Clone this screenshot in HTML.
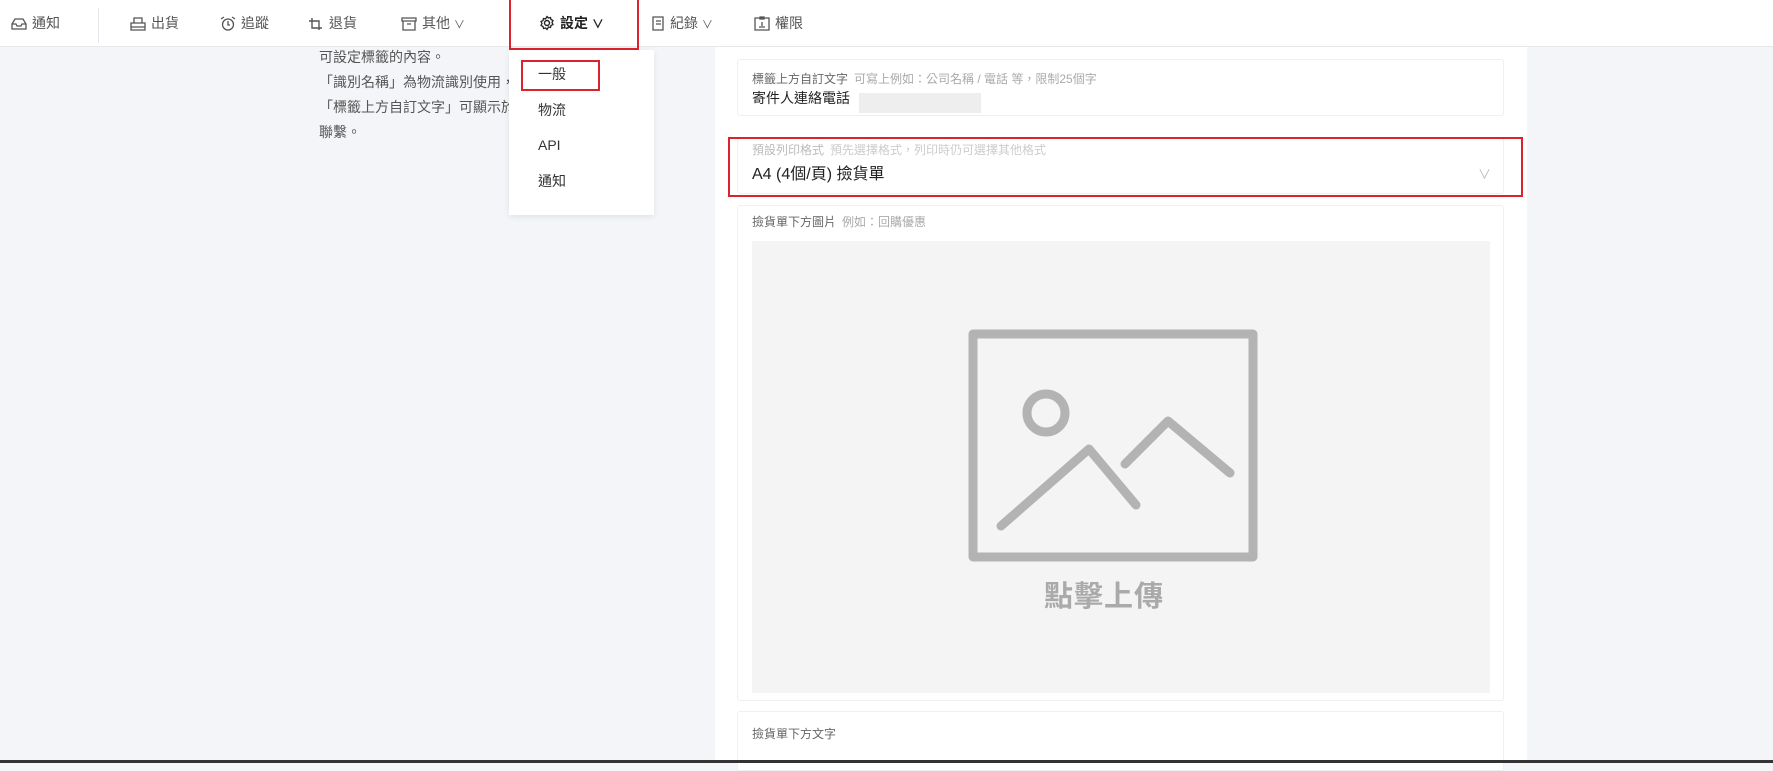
<!DOCTYPE html>
<html><head><meta charset="utf-8"><style>
*{margin:0;padding:0;box-sizing:border-box}
body{width:1773px;height:763px;overflow:hidden;background:#f3f5f8;font-family:"Liberation Sans","Noto Sans CJK TC",sans-serif;color:#333;position:relative}
.a{position:absolute;white-space:nowrap}
.nav{position:absolute;left:0;top:0;width:1773px;height:47px;background:#fff;border-bottom:1px solid #e5e7ea}
.ni{position:absolute;top:14px;font-size:14px;color:#555;line-height:18px}
.ni svg{vertical-align:-3px;margin-right:5px}
.red{position:absolute;border:2px solid #d9232e}
.panel{position:absolute;left:715px;top:47px;width:812px;height:716px;background:#fff}
.card{position:absolute;left:737px;width:767px;background:#fff;border:1px solid #eef0f2;border-radius:3px}
.lbl{font-size:12px;color:#666}
.lbl span{color:#aaa;margin-left:6px}
.lt{font-size:14px;color:#555;line-height:25px}
</style></head><body>
<div class="nav"></div>
<div class="a" style="left:98px;top:8px;width:1px;height:35px;background:#e5e7ea"></div>
<div class="ni a" style="left:11px"><svg width="16" height="14" viewBox="0 0 16 14"><path d="M1 7l3-5h8l3 5v5H1z M1 7h4l1 2h4l1-2h4" fill="none" stroke="#555" stroke-width="1.3"/></svg>通知</div>
<div class="ni a" style="left:130px"><svg width="16" height="14" viewBox="0 0 16 14"><path d="M4 6V1h8v5 M1 6h14v7H1z M1 10h14" fill="none" stroke="#555" stroke-width="1.3"/></svg>出貨</div>
<div class="ni a" style="left:220px"><svg width="16" height="15" viewBox="0 0 16 15"><circle cx="8" cy="8.5" r="5.5" fill="none" stroke="#555" stroke-width="1.3"/><path d="M8 5v4h2 M1 3l3-2 M15 3l-3-2" fill="none" stroke="#555" stroke-width="1.3"/></svg>追蹤</div>
<div class="ni a" style="left:308px"><svg width="16" height="14" viewBox="0 0 16 14"><path d="M4 1v10h10 M1 4h10v9" fill="none" stroke="#555" stroke-width="1.4"/></svg>退貨</div>
<div class="ni a" style="left:401px"><svg width="16" height="14" viewBox="0 0 16 14"><path d="M1 1h14v3H1z M2 4v9h12V4 M6 7h4" fill="none" stroke="#555" stroke-width="1.3"/></svg>其他 <span style="font-size:11px">∨</span></div>
<div class="ni a" style="left:539px;color:#222;font-weight:bold"><svg width="16" height="16" viewBox="0 0 16 16"><circle cx="8" cy="8" r="2.5" fill="none" stroke="#222" stroke-width="1.4"/><path d="M8 1.5l1.5 1.5 2-.5.5 2 2 1-1 2 1 2-2 1-.5 2-2-.5L8 14.5 6.5 13l-2 .5-.5-2-2-1 1-2-1-2 2-1 .5-2 2 .5z" fill="none" stroke="#222" stroke-width="1.3"/></svg>設定 <span style="font-size:12px">∨</span></div>
<div class="ni a" style="left:651px"><svg width="14" height="15" viewBox="0 0 14 15"><path d="M2 1h10v13H2z M5 5h5 M5 8h5" fill="none" stroke="#555" stroke-width="1.3"/></svg>紀錄 <span style="font-size:11px">∨</span></div>
<div class="ni a" style="left:754px"><svg width="16" height="15" viewBox="0 0 16 15"><path d="M1 2h14v12H1z M6 1h4v2H6z M8 6v4 M5 11h6" fill="none" stroke="#555" stroke-width="1.3"/></svg>權限</div>
<div class="red" style="left:509px;top:-2px;width:130px;height:52px"></div>

<div class="a lt" style="left:319px;top:45px">可設定標籤的內容。<br>「識別名稱」為物流識別使用，不會顯示於標籤上。<br>「標籤上方自訂文字」可顯示於標籤上方，方便客<br>聯繫。</div>

<div class="a" style="left:509px;top:50px;width:145px;height:165px;background:#fff;box-shadow:0 2px 6px rgba(0,0,0,.08)"></div>
<div class="a" style="left:538px;top:57px;font-size:14px;line-height:35.5px;color:#333">一般<br>物流<br>API<br>通知</div>
<div class="red" style="left:521px;top:60px;width:79px;height:31px"></div>

<div class="panel"></div>
<div class="card" style="top:59px;height:57px"></div>
<div class="a lbl" style="left:752px;top:70px">標籤上方自訂文字<span>可寫上例如：公司名稱 / 電話 等，限制25個字</span></div>
<div class="a" style="left:752px;top:88px;font-size:14px;color:#222">寄件人連絡電話</div>
<div class="a" style="left:859px;top:93px;width:122px;height:20px;background:#eeeeee"></div>

<div class="card" style="top:138px;height:56px"></div>
<div class="a lbl" style="left:752px;top:141px;color:#bbb">預設列印格式<span style="color:#ccc">預先選擇格式，列印時仍可選擇其他格式</span></div>
<div class="a" style="left:752px;top:160px;font-size:16px;color:#222">A4 (4個/頁) 撿貨單</div>
<div class="a" style="left:1478px;top:164px;font-size:13px;color:#bbb">∨</div>
<div class="red" style="left:728px;top:137px;width:795px;height:60px"></div>

<div class="card" style="top:205px;height:496px"></div>
<div class="a lbl" style="left:752px;top:213px">撿貨單下方圖片<span>例如：回購優惠</span></div>
<div class="a" style="left:752px;top:241px;width:738px;height:452px;background:#f4f4f4"></div>
<svg class="a" style="left:960px;top:322px" width="310" height="250" viewBox="960 322 310 250">
<g fill="none" stroke="#b3b3b3" stroke-width="9" stroke-linecap="round" stroke-linejoin="round">
<rect x="973" y="334" width="280" height="223"/>
<circle cx="1046" cy="413" r="19"/>
<path d="M1001 526L1089 449L1136 505 M1125 464L1168 421L1230 473"/>
</g></svg>
<div class="a" style="left:1044px;top:573px;font-size:29px;font-weight:bold;color:#aaa;letter-spacing:1px">點擊上傳</div>

<div class="card" style="top:711px;height:60px"></div>
<div class="a lbl" style="left:752px;top:725px">撿貨單下方文字</div>
<div class="a" style="left:0;top:760px;width:1773px;height:3px;background:#333"></div>
</body></html>
